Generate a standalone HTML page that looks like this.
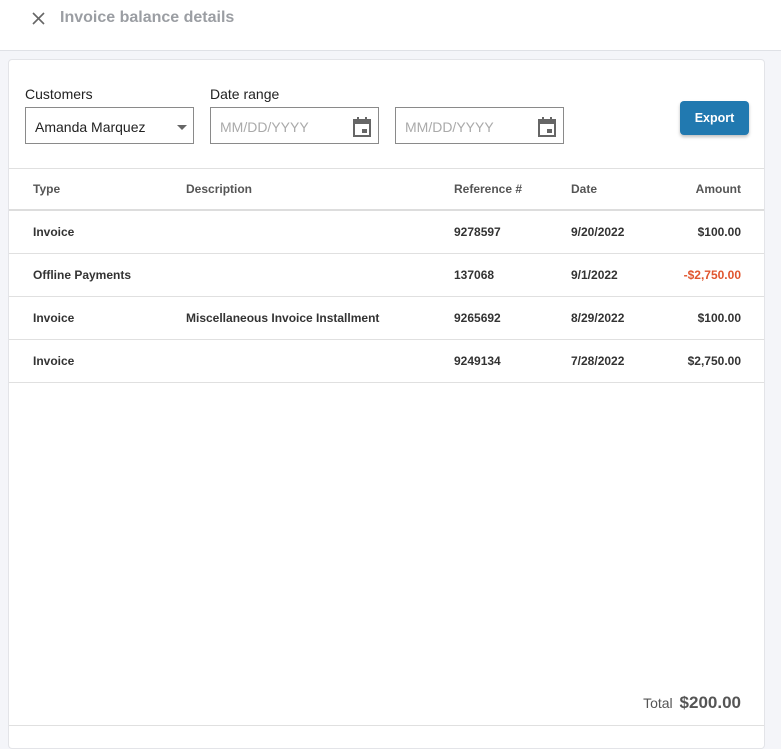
<!DOCTYPE html>
<html><head><style>
*{box-sizing:border-box;margin:0;padding:0}
body{width:781px;height:737px;background:#f4f5f9;font-family:"Liberation Sans",Arial,sans-serif;position:relative;overflow:hidden;color:#222}
.hdr{position:absolute;left:0;top:0;width:781px;height:51px;background:#fff;border-bottom:1px solid #dfe1e6}
.hdr .t{position:absolute;left:60px;top:9px;font-size:16px;font-weight:bold;color:#9b9ea3}
.card{position:absolute;left:8px;top:59px;width:757px;height:690px;background:#fff;border:1px solid #e3e4e8;border-radius:4px}
.lbl{position:absolute;font-size:14px;color:#222;top:26px}
.box{position:absolute;top:47px;height:37px;border:1px solid #8a8a8a;font-size:14px;padding:0 9px;line-height:39px}
.ph{color:#aaa}
.cal{position:absolute;right:7px;top:9px}
.btn{position:absolute;left:671px;top:41px;width:69px;height:34px;background:#2179b0;border-radius:4px;color:#fff;font-weight:bold;font-size:12.5px;text-align:center;line-height:34px;box-shadow:0 2px 3px rgba(0,0,0,.25)}
.row{position:absolute;left:0;width:755px;height:43px;border-bottom:1px solid #e0e0e0;font-size:12px;font-weight:bold;color:#333}
.row span{position:absolute;top:14px}
.th{color:#555}
.th span{top:13px}
.amt{right:23px}
.neg{color:#e0552e}
</style></head><body>
<div class="hdr">
<svg style="position:absolute;left:32px;top:12px" width="13" height="13" viewBox="0 0 13 13"><path d="M1 1L12 12M12 1L1 12" stroke="#666" stroke-width="1.6"/></svg>
<div class="t">Invoice balance details</div>
</div>
<div class="card">
<div class="lbl" style="left:16px">Customers</div>
<div class="lbl" style="left:201px">Date range</div>
<div class="box" style="left:16px;width:169px">Amanda Marquez<svg style="position:absolute;right:6px;top:17px" width="10" height="5"><path d="M0 0H10L5 5Z" fill="#666"/></svg></div>
<div class="box ph" style="left:201px;width:169px">MM/DD/YYYY<svg class="cal" width="18" height="20" viewBox="0 0 18 20"><path d="M1 3H17V19H1Z" fill="none" stroke="#666" stroke-width="2"/><rect x="1" y="3" width="16" height="4" fill="#666"/><rect x="4" y="0" width="2" height="4" fill="#666"/><rect x="12" y="0" width="2" height="4" fill="#666"/><rect x="9" y="12" width="5" height="4" fill="#666"/></svg></div>
<div class="box ph" style="left:386px;width:169px">MM/DD/YYYY<svg class="cal" width="18" height="20" viewBox="0 0 18 20"><path d="M1 3H17V19H1Z" fill="none" stroke="#666" stroke-width="2"/><rect x="1" y="3" width="16" height="4" fill="#666"/><rect x="4" y="0" width="2" height="4" fill="#666"/><rect x="12" y="0" width="2" height="4" fill="#666"/><rect x="9" y="12" width="5" height="4" fill="#666"/></svg></div>
<div class="btn">Export</div>
<div class="row th" style="top:108px;border-top:1px solid #e0e0e0;border-bottom:2px solid #ddd"><span style="left:24px">Type</span><span style="left:177px">Description</span><span style="left:445px">Reference #</span><span style="left:562px">Date</span><span class="amt">Amount</span></div>
<div class="row" style="top:151px"><span style="left:24px">Invoice</span><span style="left:445px">9278597</span><span style="left:562px">9/20/2022</span><span class="amt">$100.00</span></div>
<div class="row" style="top:194px"><span style="left:24px">Offline Payments</span><span style="left:445px">137068</span><span style="left:562px">9/1/2022</span><span class="amt neg">-$2,750.00</span></div>
<div class="row" style="top:237px"><span style="left:24px">Invoice</span><span style="left:177px">Miscellaneous Invoice Installment</span><span style="left:445px">9265692</span><span style="left:562px">8/29/2022</span><span class="amt">$100.00</span></div>
<div class="row" style="top:280px"><span style="left:24px">Invoice</span><span style="left:445px">9249134</span><span style="left:562px">7/28/2022</span><span class="amt">$2,750.00</span></div>
<div style="position:absolute;right:23px;top:633px;font-size:14px;color:#555"><span style="vertical-align:middle">Total</span> <span style="font-size:17px;font-weight:bold;margin-left:3px;vertical-align:middle">$200.00</span></div>
<div style="position:absolute;left:0;top:665px;width:755px;border-top:1px solid #e0e0e0"></div>
</div>
</body></html>
